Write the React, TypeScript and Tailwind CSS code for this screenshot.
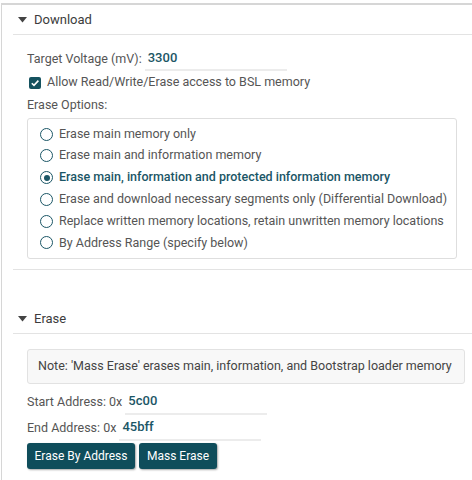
import { useState } from "react"

const eraseOptions = [
  "Erase main memory only",
  "Erase main and information memory",
  "Erase main, information and protected information memory",
  "Erase and download necessary segments only (Differential Download)",
  "Replace written memory locations, retain unwritten memory locations",
  "By Address Range (specify below)",
]

function Caret() {
  return (
    <svg width="9" height="6" viewBox="0 0 9 6" className="shrink-0">
      <path d="M0 0h9L4.5 5.5z" fill="#444" />
    </svg>
  )
}

function SectionHeader({ label }: { label: string }) {
  return (
    <div className="flex h-[30px] items-center gap-[7px] border-b border-[#e3e3e3] pl-[5px] text-[13px] text-[#3c3c3c]">
      <Caret />
      <span>{label}</span>
    </div>
  )
}

function Radio({ checked }: { checked: boolean }) {
  return (
    <span className="flex h-[13px] w-[13px] shrink-0 items-center justify-center rounded-full border-[1.5px] border-[#1b5666]">
      {checked && <span className="h-[6px] w-[6px] rounded-full bg-[#1b5666]" />}
    </span>
  )
}

function Checkbox() {
  return (
    <span className="flex h-[12px] w-[12px] shrink-0 items-center justify-center rounded-[2px] bg-[#15525f]">
      <svg width="10" height="10" viewBox="0 0 10 10">
        <path d="M1.8 5.2l2.2 2.2 4.4-4.8" fill="none" stroke="#fff" strokeWidth="1.6" />
      </svg>
    </span>
  )
}

function Field({ label, value, height }: { label: string; value: string; height: string }) {
  return (
    <div className={`flex items-center ${height}`}>
      <span className="text-[#555]">{label}</span>
      <span className="ml-[3px] flex h-full w-[142px] items-center border-b-2 border-[#ececec] pl-[3px] text-[13px] font-medium text-[#1b5666]">
        {value}
      </span>
    </div>
  )
}

export default function App() {
  const [selected, setSelected] = useState(2)

  return (
    <div className="h-[480px] w-[472px] overflow-hidden bg-white pt-[3px] pl-[1px] font-['Roboto',sans-serif] text-[12.5px]">
      <div className="h-full border-t-2 border-l border-[#d6d6d6] pl-[11px]">
        <SectionHeader label="Download" />
        <div className="pl-[14px] pt-[12px]">
          <Field label="Target Voltage (mV):" value="3300" height="h-[24px]" />
          <div className="flex h-[23px] items-center gap-[6px] pl-[2px] text-[#555]">
            <Checkbox />
            <span>Allow Read/Write/Erase access to BSL memory</span>
          </div>
          <div className="flex h-[23px] items-center text-[#555]">Erase Options:</div>
          <div className="mr-[15px] mt-[1px] flex h-[141px] flex-col justify-center rounded-[3px] border border-[#dedede] pl-[12px]">
            {eraseOptions.map((opt, i) => (
              <label
                key={opt}
                onClick={() => setSelected(i)}
                className={`flex h-[21.8px] cursor-pointer items-center gap-[6px] ${
                  i === selected ? "font-medium text-[#1b5666]" : "text-[#555]"
                }`}
              >
                <Radio checked={i === selected} />
                <span>{opt}</span>
              </label>
            ))}
          </div>
        </div>
        <div className="mt-[10px] border-b border-[#e3e3e3]" />
        <div className="h-[34px]" />
        <SectionHeader label="Erase" />
        <div className="pl-[14px] pt-[15px]">
          <div className="mr-[7px] flex h-[35px] items-center rounded-[3px] border border-[#e2e2e2] bg-[#f8f8f8] pl-[10px] text-[#444]">
            Note: 'Mass Erase' erases main, information, and Bootstrap loader memory
          </div>
          <div className="mt-[5px]">
            <Field label="Start Address: 0x" value="5c00" height="h-[26px]" />
            <Field label="End Address: 0x" value="45bff" height="h-[26px]" />
          </div>
          <div className="mt-[2px] flex gap-[4px]">
            <button className="h-[26px] w-[108px] rounded-[3px] bg-[#0f4d5b] text-[12px] text-white shadow-[1px_1px_2px_rgba(0,0,0,0.35)]">
              Erase By Address
            </button>
            <button className="h-[26px] w-[78px] rounded-[3px] bg-[#0f4d5b] text-[12px] text-white shadow-[1px_1px_2px_rgba(0,0,0,0.35)]">
              Mass Erase
            </button>
          </div>
        </div>
      </div>
    </div>
  )
}
